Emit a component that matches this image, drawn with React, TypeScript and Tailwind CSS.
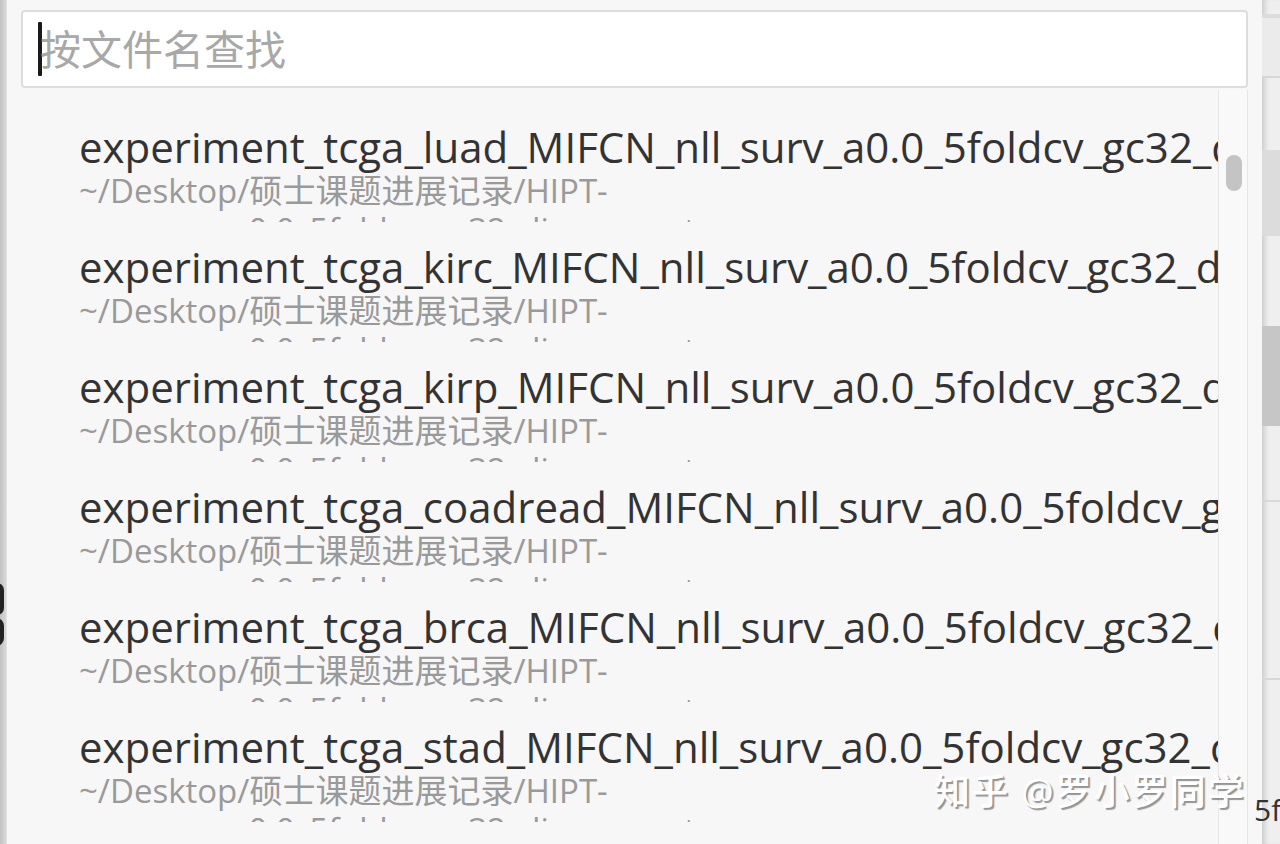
import React from 'react';

const files = [
  'experiment_tcga_luad_MIFCN_nll_surv_a0.0_5foldcv_gc32_dim_concat',
  'experiment_tcga_kirc_MIFCN_nll_surv_a0.0_5foldcv_gc32_dim_concat',
  'experiment_tcga_kirp_MIFCN_nll_surv_a0.0_5foldcv_gc32_dim_concat',
  'experiment_tcga_coadread_MIFCN_nll_surv_a0.0_5foldcv_gc32_dim_concat',
  'experiment_tcga_brca_MIFCN_nll_surv_a0.0_5foldcv_gc32_dim_concat',
  'experiment_tcga_stad_MIFCN_nll_surv_a0.0_5foldcv_gc32_dim_concat',
];

export default function App() {
  return (
    <div className="relative w-[1280px] h-[844px] flex overflow-hidden bg-[#f7f7f7] font-['Open_Sans','Noto_Sans_CJK_SC',sans-serif]">
      {/* window behind, left edge */}
      <div className="relative w-[6px] shrink-0 bg-gradient-to-r from-[#c2c2c2] to-[#d8d8d8] overflow-hidden">
        <div className="absolute left-[-10px] top-[583px] w-[14px] h-[32px] rounded-full border-r-[5px] border-[#222]" />
        <div className="absolute left-[-12px] top-[618px] w-[16px] h-[28px] rounded-full bg-[#222]" />
      </div>

      {/* quick open panel */}
      <div className="w-[1256px] shrink-0 flex flex-col bg-[#f7f7f7] px-[14px] pt-[10px] border-l border-[#e2e2e2]">
        <div className="h-[78px] shrink-0 flex items-center bg-white border-2 border-[#dddddd] rounded-[4px] pl-[15px]">
          <span className="w-[4px] h-[54px] bg-[#1a1a1a] rounded-[1px]" />
          <span className="-ml-[2px] text-[41px] leading-none text-[#a8a8a8]">按文件名查找</span>
        </div>

        <div className="flex flex-1 min-h-0 mt-[2px] border-r border-[#e6e6e6]">
          <div className="flex-1 min-w-0 overflow-hidden pt-[12px]">
            {files.map((name) => (
              <div key={name} className="h-[120px] overflow-hidden pl-[58px] pt-[20px]">
                <div className="whitespace-nowrap text-[42px] leading-[50px] text-[#333333]">{name}</div>
                <div className="whitespace-nowrap text-[33px] leading-[38px] text-[#9a9a9a]">~/Desktop/硕士课题进展记录/HIPT-</div>
                <div className="whitespace-nowrap text-[33px] leading-[40px] text-[#9a9a9a]">cnn_surv_a0.0_5foldcv_gc32_dim_concat</div>
              </div>
            ))}
          </div>
          <div className="w-[29px] shrink-0 border-l border-[#e6e6e6] bg-[#f9f9f9] pt-[65px] pl-[7px]">
            <div className="w-[16px] h-[36px] rounded-full bg-[#c4c4c4]" />
          </div>
        </div>
      </div>

      {/* window behind, right edge */}
      <div className="w-[18px] shrink-0 flex flex-col bg-[#efefef] shadow-[inset_6px_0_6px_-4px_rgba(0,0,0,0.18)]">
        <div className="h-[14px]" />
        <div className="h-[4px] bg-[#dcdcdc]" />
        <div className="h-[58px] bg-[#ebebeb]" />
        <div className="h-[2px] bg-[#d6d6d6]" />
        <div className="h-[72px]" />
        <div className="h-[86px] bg-[#dcdcdc]" />
        <div className="h-[90px]" />
        <div className="h-[100px] bg-[#c6c6c6]" />
        <div className="h-[74px]" />
        <div className="h-[2px] bg-[#d8d8d8]" />
        <div className="h-[176px]" />
        <div className="h-[2px] bg-[#d8d8d8]" />
        <div className="h-[112px]" />
        <div className="text-[30px] leading-[36px] text-[#333] whitespace-nowrap -ml-[8px]">5f</div>
      </div>

      <div className="absolute left-[934px] top-[770px] text-[36px] leading-[44px] font-medium tracking-[2px] text-white [text-shadow:2px_2px_1px_rgba(0,0,0,0.4)]">
        知乎 @罗小罗同学
      </div>
    </div>
  );
}
